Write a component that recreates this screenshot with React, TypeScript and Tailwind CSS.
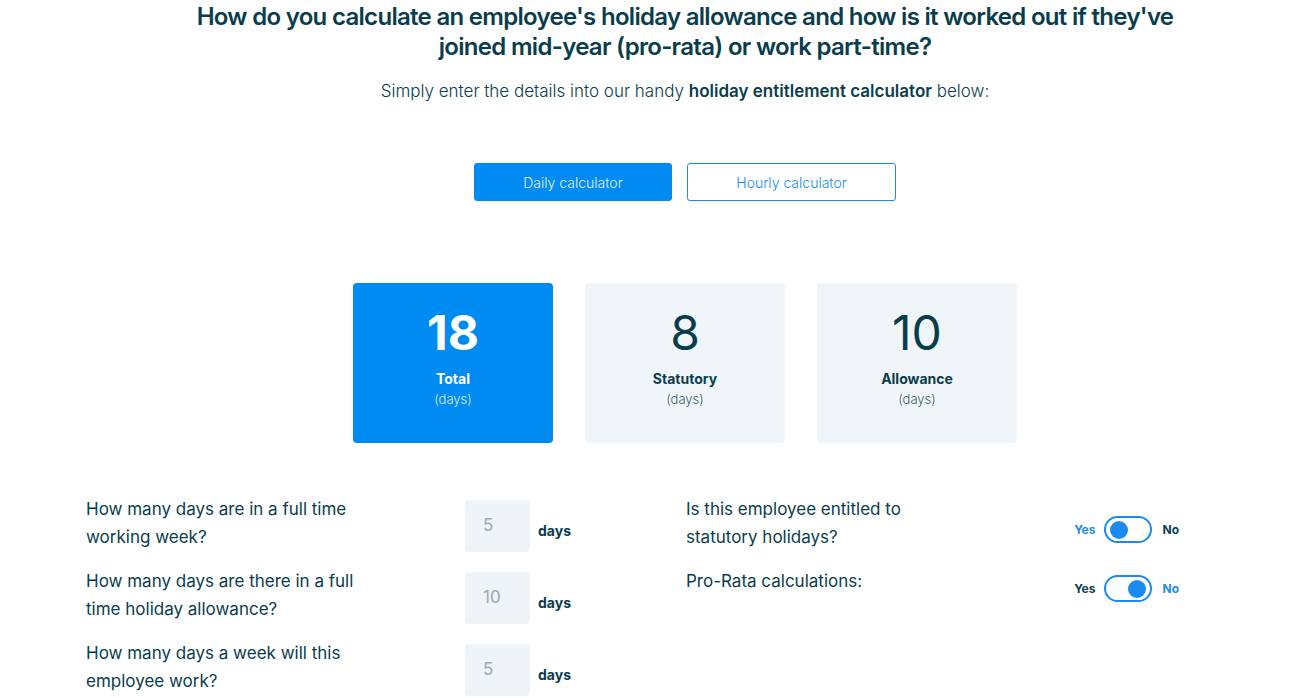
import { useState } from "react";

const font = { fontFamily: "Inter, 'Noto Sans', sans-serif" };

function StatCard({ value, label, active }: { value: string; label: string; active?: boolean }) {
  return (
    <div
      className={`w-[200px] h-[160px] rounded-[4px] flex flex-col items-center pt-[24px] ${
        active ? "bg-[#008bf3] text-white" : "bg-[#f0f5fa] text-[#0a3d4c]"
      }`}
    >
      <div className={`text-[48px] leading-[52px] ${active ? "font-bold" : "font-normal"}`}>{value}</div>
      <div className="mt-[10px] text-[14px] leading-[20px] font-bold">{label}</div>
      <div className={`text-[13px] leading-[20px] font-light ${active ? "text-[#d6ebff]" : "text-[#3a6270]"}`}>
        (days)
      </div>
    </div>
  );
}

function NumberRow({ lines, value }: { lines: [string, string]; value: string }) {
  return (
    <div className="flex items-start">
      <div className="w-[379px] text-[17px] leading-[28px] text-[#0a3d4c]">
        {lines[0]}
        <br />
        {lines[1]}
      </div>
      <div className="mt-[5px] w-[65px] h-[52px] rounded-[4px] bg-[#eff4f9] flex items-center pl-[18px] text-[17px] text-[#9aa9b5]">
        {value}
      </div>
      <div className="mt-[25px] ml-[8px] text-[14px] font-bold text-[#0a3d4c]">days</div>
    </div>
  );
}

function Toggle({ yes, onClick }: { yes: boolean; onClick: () => void }) {
  return (
    <div className="flex items-center text-[12px] font-bold">
      <span className={yes ? "text-[#1a8cf0]" : "text-[#0a3d4c]"}>Yes</span>
      <button
        onClick={onClick}
        className={`ml-[9px] w-[48px] h-[27px] rounded-full border-2 border-[#1a8cf0] bg-white flex items-center px-[4px] ${
          yes ? "justify-start" : "justify-end"
        }`}
      >
        <span className="w-[18px] h-[18px] rounded-full bg-[#1a8cf0]" />
      </button>
      <span className={`ml-[10px] ${yes ? "text-[#0a3d4c]" : "text-[#1a8cf0]"}`}>No</span>
    </div>
  );
}

export default function App() {
  const [mode, setMode] = useState<"daily" | "hourly">("daily");
  const [statutory, setStatutory] = useState(true);
  const [proRata, setProRata] = useState(false);

  return (
    <div className="min-h-screen bg-white pl-[86px] pr-[30px]" style={font}>
      <div className="flex flex-col items-center">
        <h1 className="pt-[2px] text-center text-[24px] leading-[30px] font-semibold text-[#0a3d4c] tracking-[-0.7px]">
          How do you calculate an employee's holiday allowance and how is it worked out if they've
          <br />
          joined mid-year (pro-rata) or work part-time?
        </h1>
        <p className="mt-[15px] text-[17px] leading-[28px] text-[#0a3d4c] font-light">
          Simply enter the details into our handy <span className="font-semibold">holiday entitlement calculator</span> below:
        </p>

        <div className="mt-[58px] flex gap-[15px]">
          <button
            onClick={() => setMode("daily")}
            className={`w-[198px] h-[38px] rounded-[3px] border text-[14px] font-light ${
              mode === "daily" ? "bg-[#008bf3] border-[#008bf3] text-[#e3f1ff]" : "bg-white border-[#1a8cf0] text-[#1a8cf0]"
            }`}
          >
            Daily calculator
          </button>
          <button
            onClick={() => setMode("hourly")}
            className={`w-[209px] h-[38px] rounded-[3px] border text-[14px] font-light ${
              mode === "hourly" ? "bg-[#008bf3] border-[#008bf3] text-[#e3f1ff]" : "bg-white border-[#1a8cf0] text-[#1a8cf0]"
            }`}
          >
            Hourly calculator
          </button>
        </div>

        <div className="mt-[82px] flex gap-[32px]">
          <StatCard value="18" label="Total" active />
          <StatCard value="8" label="Statutory" />
          <StatCard value="10" label="Allowance" />
        </div>
      </div>

      <div className="mt-[52px] flex">
        <div className="w-[600px] flex flex-col gap-[15px]">
          <NumberRow lines={["How many days are in a full time", "working week?"]} value="5" />
          <NumberRow lines={["How many days are there in a full", "time holiday allowance?"]} value="10" />
          <NumberRow lines={["How many days a week will this", "employee work?"]} value="5" />
        </div>
        <div className="w-[493px] flex flex-col">
          <div className="flex items-start justify-between">
            <div className="text-[17px] leading-[28px] text-[#0a3d4c]">
              Is this employee entitled to
              <br />
              statutory holidays?
            </div>
            <div className="mt-[21px]">
              <Toggle yes={statutory} onClick={() => setStatutory(!statutory)} />
            </div>
          </div>
          <div className="mt-[16px] flex items-start justify-between">
            <div className="text-[17px] leading-[28px] text-[#0a3d4c]">Pro-Rata calculations:</div>
            <div className="mt-[8px]">
              <Toggle yes={proRata} onClick={() => setProRata(!proRata)} />
            </div>
          </div>
        </div>
      </div>
    </div>
  );
}
